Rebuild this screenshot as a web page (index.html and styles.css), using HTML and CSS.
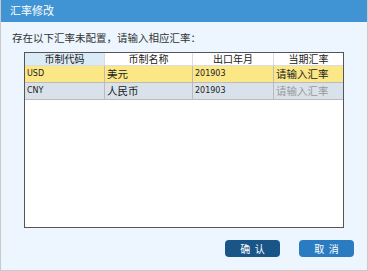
FILE: index.html
```html
<!DOCTYPE html>
<html lang="zh">
  <head>
    <meta charset="UTF-8" />
    <title>汇率修改</title>
    <link rel="stylesheet" href="styles.css">
  </head>
  <body>
    <div class="dialog">
      <div class="dialog-title">汇率修改</div>
      <div class="dialog-body">
        <p class="tip">存在以下汇率未配置，请输入相应汇率：</p>
        <div class="grid">
          <table>
            <thead>
              <tr>
                <th class="active">币制代码</th>
                <th>币制名称</th>
                <th>出口年月</th>
                <th>当期汇率</th>
              </tr>
            </thead>
            <tbody>
              <tr class="selected">
                <td class="code">USD</td>
                <td>美元</td>
                <td class="code">201903</td>
                <td>请输入汇率</td>
              </tr>
              <tr class="plain">
                <td class="code">CNY</td>
                <td>人民币</td>
                <td class="code">201903</td>
                <td class="placeholder">请输入汇率</td>
              </tr>
            </tbody>
          </table>
        </div>
        <div class="actions">
          <button class="btn btn-ok">确&nbsp;&nbsp;认</button>
          <button class="btn btn-cancel">取&nbsp;&nbsp;消</button>
        </div>
      </div>
    </div>
  </body>
</html>
```

FILE: styles.css
```css
body {
  margin: 0;
  font-family: "Noto Sans CJK SC", "Liberation Sans", sans-serif;
  font-size: 11px;
  background: #fff;
}
.dialog {
  width: 366px;
  height: 270px;
  border-left: 1px solid #c9c9c9;
  border-right: 1px solid #c9c9c9;
  border-bottom: 1px solid #c9c9c9;
  display: flex;
  flex-direction: column;
  background: #edf5fe;
}
.dialog-title {
  height: 22px;
  line-height: 21px;
  padding-left: 9px;
  background: #4194d3;
  color: #fff;
  font-size: 11px;
}
.dialog-body {
  flex: 1;
  display: flex;
  flex-direction: column;
  padding: 0 23px 0 23px;
}
.tip {
  margin: 8px 0 0 -12px;
  height: 16px;
  line-height: 16px;
  color: #333;
  font-size: 10.5px;
}
.grid {
  margin-top: 6px;
  height: 174px;
  border: 1px solid #555;
  background: #fff;
}
table {
  width: 100%;
  border-collapse: collapse;
  table-layout: fixed;
}
th {
  height: 12px;
  padding: 0;
  font-weight: normal;
  font-size: 10px;
  line-height: 12px;
  color: #222;
  border-right: 1px solid #dcdcdc;
  border-bottom: 1px solid #dcdcdc;
}
th:nth-child(1) { width: 79px; }
th:nth-child(2) { width: 87px; }
th:nth-child(3) { width: 80px; }
th:last-child { border-right: none; }
th.active {
  background: #dbeaf7;
}
td {
  height: 16px;
  padding: 0 0 0 2px;
  font-size: 10.5px;
  line-height: 16px;
  color: #222;
  border-right: 1px solid #bbb;
  border-bottom: 1px solid #bbb;
  overflow: hidden;
  white-space: nowrap;
}
td:last-child { border-right: none; }
td.code {
  font-family: "DejaVu Sans", sans-serif;
  font-size: 8px;
}
tr.selected td {
  background: #fbe786;
}
tr.plain td {
  background: #d9e2ea;
}
td.placeholder {
  color: #999;
}
.actions {
  display: flex;
  justify-content: flex-end;
  gap: 19px;
  margin-top: 12px;
  margin-right: -10px;
}
.btn {
  width: 55px;
  height: 17px;
  padding: 0;
  border: none;
  border-radius: 4px;
  color: #fff;
  font-family: "Noto Sans CJK SC", sans-serif;
  font-size: 10px;
  line-height: 17px;
  cursor: pointer;
}
.btn-ok {
  background: #1a5588;
}
.btn-cancel {
  background: #2b7bc0;
}
```
